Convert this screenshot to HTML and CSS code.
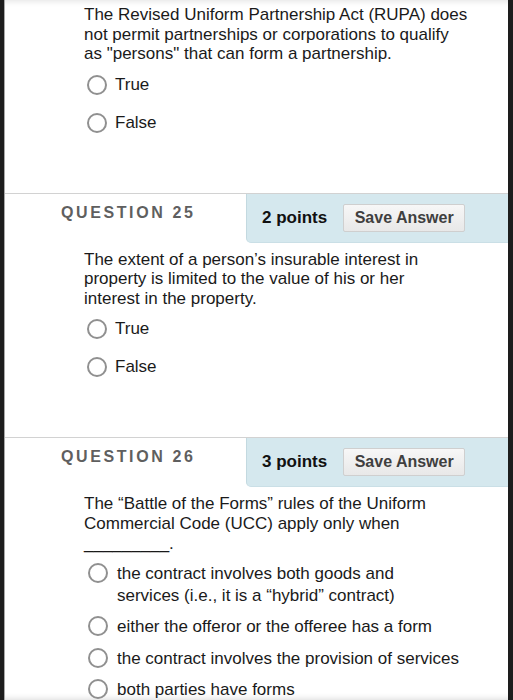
FILE: index.html
```html
<!DOCTYPE html>
<html>
<head>
<meta charset="utf-8">
<link rel="stylesheet" href="styles.css">
</head>
<body>
<div class="screen">
  <div class="question first">
    <div class="qbody">
      <p class="qtext">The Revised Uniform Partnership Act (RUPA) does<br>not permit partnerships or corporations to qualify<br>as "persons" that can form a partnership.</p>
      <ul class="options tf">
        <li><span class="radio"></span><span>True</span></li>
        <li><span class="radio"></span><span>False</span></li>
      </ul>
    </div>
  </div>

  <div class="question">
    <div class="qhead">
      <div class="qtitle">QUESTION 25</div>
      <div class="panel"><span class="points">2 points</span><button class="save">Save Answer</button></div>
    </div>
    <div class="qbody">
      <p class="qtext">The extent of a person’s insurable interest in<br>property is limited to the value of his or her<br>interest in the property.</p>
      <ul class="options tf">
        <li><span class="radio"></span><span>True</span></li>
        <li><span class="radio"></span><span>False</span></li>
      </ul>
    </div>
  </div>

  <div class="question">
    <div class="qhead">
      <div class="qtitle">QUESTION 26</div>
      <div class="panel"><span class="points">3 points</span><button class="save">Save Answer</button></div>
    </div>
    <div class="qbody">
      <p class="qtext mc">The “Battle of the Forms” rules of the Uniform<br>Commercial Code (UCC) apply only when<br>_________.</p>
      <ul class="options multi">
        <li><span class="radio"></span><span>the contract involves both goods and<br>services (i.e., it is a “hybrid” contract)</span></li>
        <li><span class="radio"></span><span>either the offeror or the offeree has a form</span></li>
        <li><span class="radio"></span><span>the contract involves the provision of services</span></li>
        <li><span class="radio"></span><span>both parties have forms</span></li>
      </ul>
    </div>
  </div>
</div>
</body>
</html>
```

FILE: styles.css
```css
html, body {
  margin: 0;
  padding: 0;
}
body {
  background: #1d1d1d;
  height: 700px;
  overflow: hidden;
  font-family: "Liberation Sans", Arial, Helvetica, sans-serif;
  color: #1a1a1a;
}
.screen {
  margin: 0 5px 0 4px;
  height: 700px;
  background: #fff;
  border-left: 1px solid #a8a8a8;
  box-shadow: inset 0 7px 6px -6px rgba(0,0,0,0.12), inset 0 -7px 6px -6px rgba(0,0,0,0.15);
  overflow: hidden;
}
.question {
  border-top: 1px solid #d2d2d2;
  padding-bottom: 51px;
}
.question.first {
  border-top: none;
  padding-top: 5px;
}
.qhead {
  display: flex;
  height: 49px;
}
.qtitle {
  width: 185px;
  padding-left: 56px;
  padding-top: 10px;
  font-size: 16px;
  line-height: 18px;
  font-weight: bold;
  letter-spacing: 2.6px;
  color: #5f5f5f;
}
.panel {
  flex: 1;
  display: flex;
  align-items: center;
  gap: 16px;
  padding-left: 15px;
  background: #d5e8ee;
  border-left: 1px solid #c3d9e0;
  border-bottom: 1px solid #cadfe6;
  border-bottom-left-radius: 5px;
}
.points {
  font-size: 17px;
  font-weight: bold;
  color: #111;
}
.save {
  width: 122px;
  height: 28px;
  padding: 0;
  border: 1px solid #cfcfcf;
  border-radius: 2px;
  background: linear-gradient(#f7f7f7, #e8e8e8);
  font-family: "Liberation Sans", Arial, Helvetica, sans-serif;
  font-size: 16px;
  font-weight: bold;
  color: #3f3f3f;
}
.qbody {
  padding-left: 79px;
  width: 400px;
}
.question .qhead + .qbody {
  padding-top: 7px;
}
.qtext {
  margin: 0;
  font-size: 17px;
  line-height: 19.5px;
}
.qtext.mc {
  line-height: 20px;
}
.options {
  list-style: none;
  margin: 2px 0 0 0;
  padding: 0 0 0 3px;
}
.options li {
  display: flex;
  align-items: center;
  gap: 8px;
  font-size: 17px;
}
.options.tf li {
  height: 38px;
}
.options.multi {
  margin-top: 4px;
  padding-left: 4px;
}
.options.multi li {
  align-items: flex-start;
  line-height: 21.5px;
  padding: 5px 0;
  gap: 9px;
}
.radio {
  flex: none;
  box-sizing: border-box;
  width: 20px;
  height: 20px;
  border: 2px solid #909090;
  border-radius: 50%;
  background: #fff;
}
```
